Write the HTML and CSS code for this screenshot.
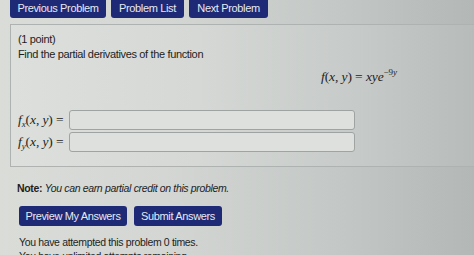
FILE: index.html
```html
<!DOCTYPE html>
<html>
<head>
<meta charset="utf-8">
<link rel="stylesheet" href="styles.css">
</head>
<body>
<div class="page">
  <nav class="nav">
    <span class="btn nav-prev">Previous Problem</span>
    <span class="btn nav-list">Problem List</span>
    <span class="btn nav-next">Next Problem</span>
  </nav>
  <section class="problem">
    <div class="points">(1 point)</div>
    <div class="prompt">Find the partial derivatives of the function</div>
    <div class="display"><span class="math"><i>f</i>(<i>x</i>, <i>y</i>) = <i>xye</i><sup>−9<i>y</i></sup></span></div>
    <div class="answers">
      <div class="row"><span class="math lbl"><i>f</i><sub><i>x</i></sub>(<i>x</i>, <i>y</i>) =</span><span class="input"></span></div>
      <div class="row"><span class="math lbl"><i>f</i><sub><i>y</i></sub>(<i>x</i>, <i>y</i>) =</span><span class="input"></span></div>
    </div>
  </section>
  <div class="note"><b>Note:</b> <i>You can earn partial credit on this problem.</i></div>
  <div class="actions">
    <span class="btn act-preview">Preview My Answers</span>
    <span class="btn act-submit">Submit Answers</span>
  </div>
  <div class="status">You have attempted this problem 0 times.<br>You have unlimited attempts remaining.</div>
</div>
</body>
</html>
```
FILE: styles.css
```css
html, body {
  margin: 0;
  padding: 0;
  overflow: hidden;
}
body {
  width: 474px;
  height: 255px;
  background: linear-gradient(to right, #dadcd8 0%, #d3d6d3 35%, #c4c8c6 70%, #b3b8b7 100%);
  font-family: "Liberation Sans", Arial, sans-serif;
  font-size: 11px;
  letter-spacing: -0.35px;
  color: #1e1e1e;
}
.page {
  display: flex;
  flex-direction: column;
}
.nav {
  display: flex;
  gap: 5px;
  margin: -5px 0 0 10px;
}
.btn {
  display: inline-flex;
  align-items: center;
  justify-content: center;
  background: #1f2a76;
  color: #e6e9f2;
  border-radius: 3px;
  font-size: 11px;
  white-space: nowrap;
  box-sizing: border-box;
}
.nav .btn {
  height: 23px;
  padding-top: 2px;
}
.nav-prev { width: 96px; }
.nav-list { width: 73px; }
.nav-next { width: 79px; }
.problem {
  margin: 6px 0 0 10px;
  border: 1px solid #aeb2b0;
  border-right: none;
  height: 143px;
  box-sizing: border-box;
  padding: 7px 0 0 7px;
  background: linear-gradient(to right, #dcdfdb 0%, #d5d8d5 40%, #c6cac8 75%, #b7bcbb 100%);
}
.points {
  line-height: 14px;
}
.prompt {
  margin-top: 1px;
  line-height: 14px;
}
.display {
  display: flex;
  justify-content: flex-start;
  padding-left: 303px;
  margin-top: 6px;
  height: 20px;
}
.math {
  font-family: "Liberation Serif", "Times New Roman", serif;
  font-size: 13.5px;
  letter-spacing: -0.1px;
}
.math sup {
  font-size: 9px;
  vertical-align: 6px;
}
.math sub {
  font-size: 9px;
  vertical-align: -3px;
}
.answers {
  display: flex;
  flex-direction: column;
  gap: 2px;
  margin-top: 23px;
}
.row {
  display: flex;
  align-items: center;
  gap: 5px;
}
.lbl {
  width: 46px;
  white-space: nowrap;
}
.input {
  width: 286px;
  height: 20px;
  border: 1px solid #9fa3a1;
  border-radius: 3px;
  box-sizing: border-box;
  background: #dde0dc;
}
.note {
  margin: 14px 0 0 17px;
  line-height: 14px;
  font-size: 10.5px;
}
.actions {
  display: flex;
  gap: 7px;
  margin: 11px 0 0 19px;
}
.actions .btn {
  height: 20px;
}
.act-preview { width: 108px; }
.act-submit { width: 88px; }
.status {
  margin: 9px 0 0 19px;
  line-height: 14px;
  font-size: 10.5px;
}
```
